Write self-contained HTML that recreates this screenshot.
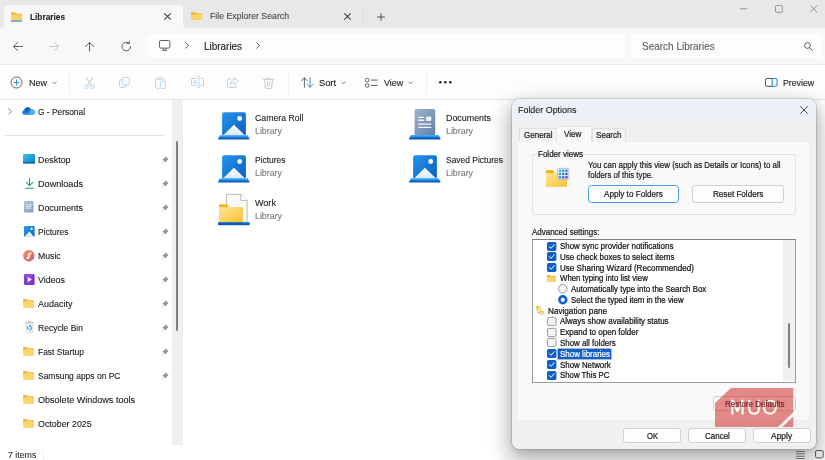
<!DOCTYPE html>
<html><head><meta charset="utf-8"><title>Libraries</title>
<style>
html,body{margin:0;padding:0;}
body{width:825px;height:460px;overflow:hidden;background:#fff;position:relative;font-family:"Liberation Sans",sans-serif;}
.a{position:absolute;}
.t{position:absolute;white-space:nowrap;-webkit-text-stroke:.12px currentColor;line-height:14px;height:14px;transform-origin:0 50%;}
.t.d{-webkit-text-stroke:.22px currentColor;}
svg{position:absolute;overflow:visible;}
.btn{position:absolute;box-sizing:border-box;background:#fdfdfd;border:1px solid #d0d0d0;border-radius:3px;}
.cb{position:absolute;width:9px;height:9px;box-sizing:border-box;border-radius:1.5px;}
.cb.on{background:#0f5fc4;}
.cb.off{background:#f6f6f6;border:1px solid #7d7d7d;}
</style></head><body>
<!-- ===== window chrome ===== -->
<div class="a" style="left:0;top:0;width:825px;height:28px;background:#e8e8e8;"></div>
<div class="a" style="left:0;top:28px;width:825px;height:36px;background:#f8f8f8;"></div>
<div class="a" style="left:0;top:64px;width:825px;height:1px;background:#e9e9e9;"></div>
<div class="a" style="left:0;top:65px;width:825px;height:34px;background:#fdfdfd;"></div>
<div class="a" style="left:0;top:99px;width:825px;height:1px;background:#e3e3e3;"></div>
<!-- active tab -->
<div class="a" style="left:4px;top:4.6px;width:179px;height:24.4px;background:#f8f8f8;border-radius:5px 5px 0 0;"></div>
<svg style="left:0;top:23px" width="190" height="6" viewBox="0 0 190 6"><path d="M0 5 Q4 5 4 1 L4 5Z M187 5 Q183 5 183 1 L183 5Z" fill="#f8f8f8"/></svg>
<!-- tab icons -->
<svg style="left:11px;top:11.5px" width="11" height="10" viewBox="0 0 11 10"><path d="M0 1.2Q0 .3 .9 .3H3.6L5 1.6H10.1Q11 1.6 11 2.5V8.4H0Z" fill="#f5b92e"/><rect x="0" y="2.6" width="11" height="6" rx=".6" fill="#fcd462"/><rect x="0" y="8.45" width="11" height="1.15" fill="#2b8bd6"/></svg>
<svg style="left:190.6px;top:11.9px" width="11.2" height="8.4" viewBox="0 0 12 10" preserveAspectRatio="none"><path d="M0 1.2Q0 .3 .9 .3H4L5.4 1.6H11.1Q12 1.6 12 2.5V8.4Q12 9.3 11.1 9.3H.9Q0 9.3 0 8.4Z" fill="#f2b632"/><rect x="0" y="2.7" width="12" height="6.6" rx=".8" fill="#fbd566"/></svg>
<!-- tab close / plus -->
<svg style="left:163.5px;top:12.5px" width="7" height="7" viewBox="0 0 7 7"><path d="M.3 .3L6.7 6.7M6.7 .3L.3 6.7" stroke="#3a3a3a" stroke-width="1.05" fill="none"/></svg>
<svg style="left:343.5px;top:12.5px" width="7" height="7" viewBox="0 0 7 7"><path d="M.3 .3L6.7 6.7M6.7 .3L.3 6.7" stroke="#3a3a3a" stroke-width="1.05" fill="none"/></svg>
<div class="a" style="left:363px;top:10px;width:1px;height:12px;background:#d6d6d6;"></div>
<svg style="left:376.5px;top:12.5px" width="8" height="8" viewBox="0 0 8 8"><path d="M4 .2V7.8M.2 4H7.8" stroke="#444" stroke-width=".9" fill="none"/></svg>
<!-- window controls -->
<svg style="left:740px;top:8px" width="8" height="2" viewBox="0 0 8 2"><path d="M0 .8H7.4" stroke="#8a8a8a" stroke-width=".9"/></svg>
<svg style="left:774.5px;top:5px" width="8" height="8" viewBox="0 0 8 8"><rect x=".5" y=".5" width="6.8" height="6.8" rx="1" fill="none" stroke="#8a8a8a" stroke-width=".9"/></svg>
<svg style="left:810px;top:5px" width="8" height="8" viewBox="0 0 8 8"><path d="M.3 .3L7.3 7.3M7.3 .3L.3 7.3" stroke="#8a8a8a" stroke-width=".9" fill="none"/></svg>
<!-- nav arrows -->
<svg style="left:12.5px;top:41.5px" width="10" height="9" viewBox="0 0 10 9"><path d="M9.6 4.5H.8M4.6 .5L.6 4.5L4.6 8.5" stroke="#555" stroke-width=".95" fill="none" stroke-linecap="round" stroke-linejoin="round"/></svg>
<svg style="left:48.8px;top:41.5px" width="10" height="9" viewBox="0 0 10 9"><path d="M.4 4.5H9.2M5.4 .5L9.4 4.5L5.4 8.5" stroke="#c2c2c2" stroke-width=".95" fill="none" stroke-linecap="round" stroke-linejoin="round"/></svg>
<svg style="left:85px;top:41.8px" width="9" height="9" viewBox="0 0 9 9"><path d="M4.5 8.8V.8M.5 4.6L4.5 .6L8.5 4.6" stroke="#555" stroke-width=".95" fill="none" stroke-linecap="round" stroke-linejoin="round"/></svg>
<svg style="left:120.5px;top:41px" width="11" height="11" viewBox="0 0 11 11"><path d="M9.6 5.5A4.3 4.3 0 1 1 7.9 2.1" stroke="#555" stroke-width=".95" fill="none" stroke-linecap="round"/><path d="M8.3 .4V2.6H6.1" stroke="#555" stroke-width=".95" fill="none" stroke-linecap="round" stroke-linejoin="round"/></svg>
<!-- address box -->
<div class="a" style="left:148px;top:34.4px;width:477.5px;height:23.2px;background:#fdfdfd;border-radius:4px;"></div>
<svg style="left:159px;top:40px" width="12" height="11" viewBox="0 0 12 11"><rect x=".5" y=".5" width="10.4" height="7.6" rx="1.4" fill="none" stroke="#555" stroke-width=".95"/><path d="M3.4 10.4H8M4.4 8.2V10.3M7 8.2V10.3" stroke="#555" stroke-width=".9" fill="none"/></svg>
<svg style="left:185.3px;top:42.4px" width="4" height="7" viewBox="0 0 4 7"><path d="M.4 .4L3.5 3.4L.4 6.4" stroke="#444" stroke-width=".9" fill="none"/></svg>
<svg style="left:256.4px;top:42.4px" width="4" height="7" viewBox="0 0 4 7"><path d="M.4 .4L3.5 3.4L.4 6.4" stroke="#444" stroke-width=".9" fill="none"/></svg>
<!-- search box -->
<div class="a" style="left:631.4px;top:34.2px;width:191.6px;height:23.4px;background:#fdfdfd;border-radius:4px;"></div>
<svg style="left:804.3px;top:42.2px" width="9" height="9" viewBox="0 0 9 9"><circle cx="3.5" cy="3.5" r="2.9" fill="none" stroke="#555" stroke-width=".95"/><path d="M5.7 5.7L8.3 8.3" stroke="#555" stroke-width="1" stroke-linecap="round"/></svg>
<!-- ===== toolbar icons ===== -->
<svg style="left:10px;top:75.6px" width="13" height="13" viewBox="0 0 13 13"><circle cx="6.5" cy="6.5" r="5.5" fill="none" stroke="#555" stroke-width=".9"/><path d="M6.5 3.9V9.1M3.9 6.5H9.1" stroke="#2e86d8" stroke-width=".95" stroke-linecap="round"/></svg>
<svg style="left:52px;top:80.6px" width="5" height="4" viewBox="0 0 5 4"><path d="M.4 .6L2.5 2.8L4.6 .6" stroke="#666" stroke-width=".8" fill="none"/></svg>
<div class="a" style="left:69px;top:71px;width:1px;height:23px;background:#f2f2f2;"></div>
<!-- cut -->
<svg style="left:83.5px;top:76.5px" width="11" height="12" viewBox="0 0 11 12"><path d="M2.2 .3L7.6 9M8.8 .3L3.4 9" stroke="#b9b9b9" stroke-width=".85" fill="none"/><circle cx="2.4" cy="9.8" r="1.7" fill="none" stroke="#a9cdf0" stroke-width=".85"/><circle cx="8.6" cy="9.8" r="1.7" fill="none" stroke="#a9cdf0" stroke-width=".85"/></svg>
<!-- copy -->
<svg style="left:119.3px;top:77.3px" width="11" height="11" viewBox="0 0 11 11"><rect x=".5" y="2.6" width="6.6" height="7.8" rx="1.6" fill="none" stroke="#c4c4c4" stroke-width=".85"/><rect x="3.4" y=".5" width="7" height="7.6" rx="1.6" fill="#fdfdfd" stroke="#a9cdf0" stroke-width=".85"/></svg>
<!-- paste -->
<svg style="left:155px;top:76.5px" width="11" height="12" viewBox="0 0 11 12"><path d="M3 1.7H1.9Q.5 1.7 .5 3.1V10Q.5 11.4 1.9 11.4H4.4" fill="none" stroke="#c4c4c4" stroke-width=".85"/><path d="M7.4 1.7H8.3Q9.5 1.7 9.5 3.1V3.8" fill="none" stroke="#c4c4c4" stroke-width=".85"/><rect x="3" y=".5" width="4.4" height="2" rx=".9" fill="none" stroke="#c4c4c4" stroke-width=".8"/><rect x="5.2" y="4.3" width="5.3" height="7.2" rx="1.3" fill="none" stroke="#a9cdf0" stroke-width=".85"/></svg>
<!-- rename -->
<svg style="left:190.5px;top:76.3px" width="13" height="12" viewBox="0 0 13 12"><path d="M6.2 2.3H2Q.5 2.3 .5 3.8V8.2Q.5 9.7 2 9.7H6.2M9.6 2.3H11Q12.5 2.3 12.5 3.8V8.2Q12.5 9.7 11 9.7H9.6" fill="none" stroke="#c4c4c4" stroke-width=".85"/><path d="M7.9 .4V11.6M6.7 .4H9.1M6.7 11.6H9.1" stroke="#a9cdf0" stroke-width=".85" fill="none"/><path d="M2.6 8L4.2 3.9L5.8 8M3.1 6.7H5.3" stroke="#a9cdf0" stroke-width=".75" fill="none"/></svg>
<!-- share -->
<svg style="left:227px;top:77px" width="12" height="11" viewBox="0 0 12 11"><path d="M4.3 1.8H2.3Q.5 1.8 .5 3.6V8.7Q.5 10.5 2.3 10.5H7.6Q9.4 10.5 9.4 8.7V8.2" fill="none" stroke="#c4c4c4" stroke-width=".85"/><path d="M7.2 .6L11.4 4.1L7.2 7.6V5.6Q4.6 5.4 3.2 7.6Q3.4 3 7.2 2.7Z" fill="none" stroke="#a9cdf0" stroke-width=".85" stroke-linejoin="round"/></svg>
<!-- delete -->
<svg style="left:263.3px;top:76.6px" width="11" height="12" viewBox="0 0 11 12"><path d="M.3 2.3H10.7M3.9 2.1Q3.9 .5 5.5 .5Q7.1 .5 7.1 2.1M1.5 2.4L2.3 10.2Q2.4 11.5 3.7 11.5H7.3Q8.6 11.5 8.7 10.2L9.5 2.4M4.4 4.8V8.9M6.6 4.8V8.9" fill="none" stroke="#c0c0c0" stroke-width=".85" stroke-linecap="round"/></svg>
<div class="a" style="left:288px;top:71px;width:1px;height:23px;background:#f0f0f0;"></div>
<!-- sort -->
<svg style="left:301px;top:77px" width="13" height="11" viewBox="0 0 13 11"><path d="M3.4 10.4V.9M.5 3.8L3.4 .8L6.3 3.8" stroke="#555" stroke-width=".9" fill="none" stroke-linecap="round" stroke-linejoin="round"/><path d="M9 .6V10.1M6.1 7.2L9 10.2L11.9 7.2" stroke="#2e86d8" stroke-width=".9" fill="none" stroke-linecap="round" stroke-linejoin="round"/></svg>
<svg style="left:340.5px;top:80.6px" width="5" height="4" viewBox="0 0 5 4"><path d="M.4 .6L2.5 2.8L4.6 .6" stroke="#666" stroke-width=".8" fill="none"/></svg>
<!-- view -->
<svg style="left:365px;top:77.6px" width="13" height="10" viewBox="0 0 13 10"><rect x=".5" y=".5" width="3.4" height="3.2" rx=".9" fill="none" stroke="#555" stroke-width=".85"/><rect x=".5" y="5.9" width="3.4" height="3.2" rx=".9" fill="none" stroke="#555" stroke-width=".85"/><path d="M6.3 2.1H12.2M6.3 7.5H12.2" stroke="#555" stroke-width=".9" stroke-linecap="round"/></svg>
<svg style="left:407.8px;top:80.6px" width="5" height="4" viewBox="0 0 5 4"><path d="M.4 .6L2.5 2.8L4.6 .6" stroke="#666" stroke-width=".8" fill="none"/></svg>
<div class="a" style="left:426px;top:71px;width:1px;height:23px;background:#f0f0f0;"></div>
<svg style="left:438.6px;top:81.4px" width="13" height="3" viewBox="0 0 13 3"><circle cx="1.3" cy="1.3" r="1.25" fill="#222"/><circle cx="6.3" cy="1.3" r="1.25" fill="#222"/><circle cx="11.3" cy="1.3" r="1.25" fill="#222"/></svg>
<!-- preview -->
<svg style="left:765px;top:78.1px" width="13" height="9" viewBox="0 0 13 9"><path d="M7.2 .5H2.2Q.5 .5 .5 2.2V6.6Q.5 8.3 2.2 8.3H7.2" fill="none" stroke="#4a4a4a" stroke-width="1"/><path d="M7.2 .5H10.4Q12.1 .5 12.1 2.2V6.6Q12.1 8.3 10.4 8.3H7.2Z" fill="none" stroke="#2e86d8" stroke-width="1.05"/></svg>
<!-- ===== nav pane ===== -->
<div class="a" style="left:171.7px;top:100px;width:11.5px;height:345.3px;background:#f0f0f0;"></div>
<div class="a" style="left:175.9px;top:141.3px;width:2.1px;height:189.5px;background:#7f7f7f;border-radius:1px;"></div>
<div class="a" style="left:5px;top:134.6px;width:160px;height:1px;background:#e3e3e3;"></div>
<svg style="left:8.2px;top:108px" width="4" height="7" viewBox="0 0 4 7"><path d="M.4 .4L3.4 3.4L.4 6.4" stroke="#666" stroke-width=".85" fill="none"/></svg>
<!-- onedrive cloud -->
<svg style="left:22.2px;top:107.2px" width="13" height="8" viewBox="0 0 13 8"><path d="M3.2 7.8Q.2 7.8 .2 5.4Q.2 3.4 2.3 3Q3 .2 5.8 .2Q8 .2 8.9 2.2Q12.8 2.4 12.8 5.3Q12.8 7.8 10.2 7.8Z" fill="#2083e4"/><path d="M2.3 3Q3 .2 5.8 .2Q8 .2 8.9 2.2Q7.5 2.4 6.6 3.6L3.8 5.4Q3 3.3 2.3 3Z" fill="#0f62c4"/><path d="M8.9 2.2Q12.8 2.4 12.8 5.3Q12.8 7.8 10.2 7.8H6L8 4.6Q8 3 8.9 2.2Z" fill="#4bb0f4"/></svg>
<!-- desktop -->
<svg style="left:23.2px;top:154.4px" width="12" height="10" viewBox="0 0 12 10"><defs><linearGradient id="gd" x1="0" y1="0" x2="1" y2="1"><stop offset="0" stop-color="#3cc4ee"/><stop offset="1" stop-color="#1278c8"/></linearGradient></defs><rect x="0" y="0" width="12" height="9.4" rx="1" fill="url(#gd)"/><rect x="0" y="8.2" width="12" height="1.2" fill="#0c5aa6"/></svg>
<!-- downloads -->
<svg style="left:24.6px;top:178px" width="9" height="11" viewBox="0 0 9 11"><path d="M4.5 .4V7.4M1.3 4.4L4.5 7.6L7.7 4.4M.6 10.2H8.4" stroke="#12a078" stroke-width="1.05" fill="none" stroke-linecap="round" stroke-linejoin="round"/></svg>
<!-- documents -->
<svg style="left:24.1px;top:201.4px" width="10" height="12" viewBox="0 0 10 12"><defs><linearGradient id="gdoc" x1="0" y1="0" x2="1" y2="1"><stop offset="0" stop-color="#b6c6de"/><stop offset="1" stop-color="#7f9bc4"/></linearGradient></defs><rect x="0" y="0" width="9.4" height="11.4" rx="1" fill="url(#gdoc)"/><path d="M2 4H4.6M2 5.6H7.4M2 7.2H7.4" stroke="#eef3fa" stroke-width=".8"/><rect x="5.4" y="2.8" width="2" height="1.8" fill="#eef3fa"/></svg>
<!-- pictures -->
<svg style="left:23.6px;top:226.3px" width="11" height="11" viewBox="0 0 11 11"><defs><linearGradient id="gpic" x1="0" y1="0" x2="1" y2="1"><stop offset="0" stop-color="#2a9df0"/><stop offset="1" stop-color="#0c62c0"/></linearGradient></defs><rect x="0" y="0" width="10.6" height="10.8" rx="1" fill="url(#gpic)"/><circle cx="7.6" cy="2.9" r="1.1" fill="#fff"/><path d="M.6 10.8L5.3 5.4L10 10.8Z" fill="#eef6ff"/></svg>
<!-- music -->
<svg style="left:22.8px;top:249.6px" width="12" height="12" viewBox="0 0 12 12"><defs><linearGradient id="gmus" x1="0" y1="0" x2="1" y2="1"><stop offset="0" stop-color="#f0925a"/><stop offset="1" stop-color="#d4587c"/></linearGradient></defs><circle cx="5.8" cy="5.8" r="5.7" fill="url(#gmus)"/><path d="M5.4 8V3.4L8 2.8V4.2L6.2 4.6V8" fill="none" stroke="#fff" stroke-width=".9"/><circle cx="4.8" cy="8" r="1.3" fill="#fff"/></svg>
<!-- videos -->
<svg style="left:23.6px;top:274px" width="11" height="11" viewBox="0 0 11 11"><defs><linearGradient id="gvid" x1="0" y1="0" x2="1" y2="1"><stop offset="0" stop-color="#a255e8"/><stop offset="1" stop-color="#7a2fc8"/></linearGradient></defs><rect x="0" y="0" width="10.6" height="10.9" rx="1" fill="url(#gvid)"/><path d="M3.8 3L7.8 5.45L3.8 7.9Z" fill="#fff"/><path d="M1.2 1.2V9.8M9.4 1.2V9.8" stroke="#5a1ea0" stroke-width="1" stroke-dasharray="1 1.1"/></svg>
<!-- recycle bin -->
<svg style="left:24.6px;top:321px" width="9" height="12" viewBox="0 0 9 12"><path d="M.6 2H8.4L7.8 11.2Q7.7 11.8 7.1 11.8H1.9Q1.3 11.8 1.2 11.2Z" fill="#eef1f4" stroke="#c5ccd3" stroke-width=".5"/><path d="M.3 1.6H8.7" stroke="#b9c0c8" stroke-width=".9"/><path d="M3 .5H6" stroke="#c5ccd3" stroke-width=".8"/><circle cx="4.5" cy="6.8" r="1.9" fill="none" stroke="#1f7fd8" stroke-width="1.1" stroke-dasharray="2.6 1.3"/></svg>

<svg style="left:23.3px;top:299.1px" width="11" height="8.5" viewBox="0 0 12 9" preserveAspectRatio="none"><path d="M0 1Q0 .1 .9 .1H4L5.4 1.4H11.1Q12 1.4 12 2.3V8Q12 8.9 11.1 8.9H.9Q0 8.9 0 8Z" fill="#f2b632"/><rect x="0" y="2.4" width="12" height="6.5" rx=".8" fill="#fbd566"/></svg>
<svg style="left:23.3px;top:347.1px" width="11" height="8.5" viewBox="0 0 12 9" preserveAspectRatio="none"><path d="M0 1Q0 .1 .9 .1H4L5.4 1.4H11.1Q12 1.4 12 2.3V8Q12 8.9 11.1 8.9H.9Q0 8.9 0 8Z" fill="#f2b632"/><rect x="0" y="2.4" width="12" height="6.5" rx=".8" fill="#fbd566"/></svg>
<svg style="left:23.3px;top:371.1px" width="11" height="8.5" viewBox="0 0 12 9" preserveAspectRatio="none"><path d="M0 1Q0 .1 .9 .1H4L5.4 1.4H11.1Q12 1.4 12 2.3V8Q12 8.9 11.1 8.9H.9Q0 8.9 0 8Z" fill="#f2b632"/><rect x="0" y="2.4" width="12" height="6.5" rx=".8" fill="#fbd566"/></svg>
<svg style="left:23.3px;top:395.1px" width="11" height="8.5" viewBox="0 0 12 9" preserveAspectRatio="none"><path d="M0 1Q0 .1 .9 .1H4L5.4 1.4H11.1Q12 1.4 12 2.3V8Q12 8.9 11.1 8.9H.9Q0 8.9 0 8Z" fill="#f2b632"/><rect x="0" y="2.4" width="12" height="6.5" rx=".8" fill="#fbd566"/></svg>
<svg style="left:23.3px;top:419.1px" width="11" height="8.5" viewBox="0 0 12 9" preserveAspectRatio="none"><path d="M0 1Q0 .1 .9 .1H4L5.4 1.4H11.1Q12 1.4 12 2.3V8Q12 8.9 11.1 8.9H.9Q0 8.9 0 8Z" fill="#f2b632"/><rect x="0" y="2.4" width="12" height="6.5" rx=".8" fill="#fbd566"/></svg>
<svg style="left:160.8px;top:155.5px" width="8" height="8" viewBox="0 0 8 8"><path d="M4.6 .3L7.7 3.4L6.6 3.8L5.2 5.2L5 6.8L3.2 5L.5 7.7L.3 7.5L3 4.8L1.2 3L2.8 2.8L4.2 1.4Z" fill="#8a96a1"/></svg>
<svg style="left:160.8px;top:179.5px" width="8" height="8" viewBox="0 0 8 8"><path d="M4.6 .3L7.7 3.4L6.6 3.8L5.2 5.2L5 6.8L3.2 5L.5 7.7L.3 7.5L3 4.8L1.2 3L2.8 2.8L4.2 1.4Z" fill="#8a96a1"/></svg>
<svg style="left:160.8px;top:203.5px" width="8" height="8" viewBox="0 0 8 8"><path d="M4.6 .3L7.7 3.4L6.6 3.8L5.2 5.2L5 6.8L3.2 5L.5 7.7L.3 7.5L3 4.8L1.2 3L2.8 2.8L4.2 1.4Z" fill="#8a96a1"/></svg>
<svg style="left:160.8px;top:227.5px" width="8" height="8" viewBox="0 0 8 8"><path d="M4.6 .3L7.7 3.4L6.6 3.8L5.2 5.2L5 6.8L3.2 5L.5 7.7L.3 7.5L3 4.8L1.2 3L2.8 2.8L4.2 1.4Z" fill="#8a96a1"/></svg>
<svg style="left:160.8px;top:251.5px" width="8" height="8" viewBox="0 0 8 8"><path d="M4.6 .3L7.7 3.4L6.6 3.8L5.2 5.2L5 6.8L3.2 5L.5 7.7L.3 7.5L3 4.8L1.2 3L2.8 2.8L4.2 1.4Z" fill="#8a96a1"/></svg>
<svg style="left:160.8px;top:275.5px" width="8" height="8" viewBox="0 0 8 8"><path d="M4.6 .3L7.7 3.4L6.6 3.8L5.2 5.2L5 6.8L3.2 5L.5 7.7L.3 7.5L3 4.8L1.2 3L2.8 2.8L4.2 1.4Z" fill="#8a96a1"/></svg>
<svg style="left:160.8px;top:299.5px" width="8" height="8" viewBox="0 0 8 8"><path d="M4.6 .3L7.7 3.4L6.6 3.8L5.2 5.2L5 6.8L3.2 5L.5 7.7L.3 7.5L3 4.8L1.2 3L2.8 2.8L4.2 1.4Z" fill="#8a96a1"/></svg>
<svg style="left:160.8px;top:323.5px" width="8" height="8" viewBox="0 0 8 8"><path d="M4.6 .3L7.7 3.4L6.6 3.8L5.2 5.2L5 6.8L3.2 5L.5 7.7L.3 7.5L3 4.8L1.2 3L2.8 2.8L4.2 1.4Z" fill="#8a96a1"/></svg>
<svg style="left:160.8px;top:347.5px" width="8" height="8" viewBox="0 0 8 8"><path d="M4.6 .3L7.7 3.4L6.6 3.8L5.2 5.2L5 6.8L3.2 5L.5 7.7L.3 7.5L3 4.8L1.2 3L2.8 2.8L4.2 1.4Z" fill="#8a96a1"/></svg>
<svg style="left:160.8px;top:371.5px" width="8" height="8" viewBox="0 0 8 8"><path d="M4.6 .3L7.7 3.4L6.6 3.8L5.2 5.2L5 6.8L3.2 5L.5 7.7L.3 7.5L3 4.8L1.2 3L2.8 2.8L4.2 1.4Z" fill="#8a96a1"/></svg>
<svg width="0" height="0" style="left:0;top:0"><defs>
<linearGradient id="gsq" x1="0" y1="0" x2="1" y2="1"><stop offset="0" stop-color="#2496ee"/><stop offset="1" stop-color="#0a5dbd"/></linearGradient>
<linearGradient id="gbase" x1="0" y1="0" x2="0" y2="1"><stop offset="0" stop-color="#4ab2f8"/><stop offset=".4" stop-color="#2d93ea"/><stop offset=".6" stop-color="#0f66c8"/><stop offset="1" stop-color="#0a56b4"/></linearGradient>
<linearGradient id="gmt" x1="0" y1="0" x2="0" y2="1"><stop offset="0" stop-color="#ffffff"/><stop offset="1" stop-color="#d6e9fb"/></linearGradient>
<linearGradient id="gdc" x1="0" y1="0" x2="1" y2="1"><stop offset="0" stop-color="#9fb3cf"/><stop offset="1" stop-color="#607fa9"/></linearGradient>
<linearGradient id="gfb" x1="0" y1="0" x2="1" y2="1"><stop offset="0" stop-color="#fde391"/><stop offset="1" stop-color="#fcc437"/></linearGradient>
</defs></svg>
<svg style="left:217.9px;top:112.1px" width="32" height="28" viewBox="0 0 32 28"><rect x="4.1" y=".2" width="23.8" height="23.6" rx="2" fill="url(#gsq)"/><circle cx="21.7" cy="6.5" r="2.4" fill="#fff"/><path d="M5 23.6L15.9 12.8L27.2 23.6Z" fill="url(#gmt)"/><path d="M1.9 23.2H29.7L31.6 27Q31.7 27.6 31 27.6H.6Q-.1 27.6 0 27Z" fill="url(#gbase)"/></svg>
<svg style="left:217.9px;top:154.8px" width="32" height="28" viewBox="0 0 32 28"><rect x="4.1" y=".2" width="23.8" height="23.6" rx="2" fill="url(#gsq)"/><circle cx="21.7" cy="6.5" r="2.4" fill="#fff"/><path d="M5 23.6L15.9 12.8L27.2 23.6Z" fill="url(#gmt)"/><path d="M1.9 23.2H29.7L31.6 27Q31.7 27.6 31 27.6H.6Q-.1 27.6 0 27Z" fill="url(#gbase)"/></svg>
<svg style="left:408.7px;top:154.8px" width="32" height="28" viewBox="0 0 32 28"><rect x="4.1" y=".2" width="23.8" height="23.6" rx="2" fill="url(#gsq)"/><circle cx="21.7" cy="6.5" r="2.4" fill="#fff"/><path d="M5 23.6L15.9 12.8L27.2 23.6Z" fill="url(#gmt)"/><path d="M1.9 23.2H29.7L31.6 27Q31.7 27.6 31 27.6H.6Q-.1 27.6 0 27Z" fill="url(#gbase)"/></svg>
<svg style="left:408.7px;top:109.3px" width="32" height="31" viewBox="0 0 32 31"><rect x="5.5" y=".1" width="20.7" height="26.3" rx="1.6" fill="url(#gdc)"/><path d="M9.2 8.4H15.3M9.2 11.2H15.3M9.2 15.1H22.3M9.2 18.4H22.3" stroke="#f3f6fb" stroke-width="1.4"/><rect x="17.2" y="7.6" width="5.1" height="4.3" fill="#f3f6fb"/><path d="M1.9 26H29.7L31.6 29.8Q31.7 30.4 31 30.4H.6Q-.1 30.4 0 29.8Z" fill="url(#gbase)"/></svg>
<svg style="left:217.9px;top:193.9px" width="32" height="32" viewBox="0 0 32 32"><path d="M9 .3H22.8L29.1 6.5V28.4H8.4V.9Q8.4 .3 9 .3Z" fill="#f9f9f9" stroke="#9c9c9c" stroke-width=".7"/><path d="M22.8 .3V5.3Q22.8 6.5 24 6.5H29.1" fill="#fff" stroke="#9c9c9c" stroke-width=".7"/><path d="M1.1 11.4Q1.1 10.2 2.3 10.2H9.3L11.2 13H23.6Q24.8 13 24.8 14.2V28.7H1.1Z" fill="#f5b21c"/><rect x="1.1" y="13.1" width="23.7" height="15.6" rx="1" fill="url(#gfb)"/><path d="M0 28.2H31.7V30.6Q31.7 31.3 31 31.3H.7Q0 31.3 0 30.6Z" fill="#0b5cbf"/><path d="M24.8 28.2H31.2V29.2H24.8Z" fill="#2f9bec"/></svg>
<div class="a" style="left:43px;top:450.3px;width:1px;height:10px;background:#eeeeee;"></div>
<svg style="left:796.1px;top:451px" width="9" height="8" viewBox="0 0 9 8"><path d="M0 .5H8.7M0 2.85H8.7M0 5.3H8.7M0 7.5H8.7" stroke="#6a6a6a" stroke-width=".8"/></svg>
<svg style="left:814.7px;top:450.4px" width="9" height="9" viewBox="0 0 9 9"><rect x=".5" y=".5" width="7.7" height="7.4" rx="1.3" fill="#f6f6f6" stroke="#5e5e5e" stroke-width="1"/></svg>
<span id="t0" class="t" style="left:30.00px;top:9.80px;font-size:9.6px;color:#222;font-weight:bold;transform:scaleX(0.8635);font-family:"Liberation Sans", sans-serif;">Libraries</span>
<span id="t1" class="t" style="left:209.60px;top:9.40px;font-size:9.6px;color:#4a4a4a;font-weight:normal;transform:scaleX(0.9089);font-family:"Liberation Sans", sans-serif;">File Explorer Search</span>
<span id="t2" class="t" style="left:203.70px;top:39.90px;font-size:10.4px;color:#1a1a1a;font-weight:normal;transform:scaleX(0.9559);font-family:"Liberation Sans", sans-serif;">Libraries</span>
<span id="t3" class="t" style="left:642.30px;top:40.30px;font-size:10.4px;color:#5c5c5c;font-weight:normal;transform:scaleX(0.9607);font-family:"Liberation Sans", sans-serif;">Search Libraries</span>
<span id="t4" class="t" style="left:29.00px;top:76.10px;font-size:9.8px;color:#1a1a1a;font-weight:normal;transform:scaleX(0.9179);font-family:"Liberation Sans", sans-serif;">New</span>
<span id="t5" class="t" style="left:318.80px;top:76.10px;font-size:9.8px;color:#1a1a1a;font-weight:normal;transform:scaleX(0.9461);font-family:"Liberation Sans", sans-serif;">Sort</span>
<span id="t6" class="t" style="left:383.80px;top:76.10px;font-size:9.8px;color:#1a1a1a;font-weight:normal;transform:scaleX(0.9116);font-family:"Liberation Sans", sans-serif;">View</span>
<span id="t7" class="t" style="left:783.30px;top:76.10px;font-size:9.8px;color:#1a1a1a;font-weight:normal;transform:scaleX(0.8922);font-family:"Liberation Sans", sans-serif;">Preview</span>
<span id="t8" class="t" style="left:38.00px;top:104.80px;font-size:9.6px;color:#1b1b1b;font-weight:normal;transform:scaleX(0.8726);font-family:"Liberation Sans", sans-serif;">G - Personal</span>
<span id="t9" class="t" style="left:38.00px;top:152.70px;font-size:9.6px;color:#1b1b1b;font-weight:normal;transform:scaleX(0.9232);font-family:"Liberation Sans", sans-serif;">Desktop</span>
<span id="t10" class="t" style="left:38.00px;top:176.70px;font-size:9.6px;color:#1b1b1b;font-weight:normal;transform:scaleX(0.9480);font-family:"Liberation Sans", sans-serif;">Downloads</span>
<span id="t11" class="t" style="left:38.00px;top:200.70px;font-size:9.6px;color:#1b1b1b;font-weight:normal;transform:scaleX(0.9272);font-family:"Liberation Sans", sans-serif;">Documents</span>
<span id="t12" class="t" style="left:38.00px;top:224.70px;font-size:9.6px;color:#1b1b1b;font-weight:normal;transform:scaleX(0.8772);font-family:"Liberation Sans", sans-serif;">Pictures</span>
<span id="t13" class="t" style="left:38.00px;top:248.70px;font-size:9.6px;color:#1b1b1b;font-weight:normal;transform:scaleX(0.9057);font-family:"Liberation Sans", sans-serif;">Music</span>
<span id="t14" class="t" style="left:38.00px;top:272.70px;font-size:9.6px;color:#1b1b1b;font-weight:normal;transform:scaleX(0.9255);font-family:"Liberation Sans", sans-serif;">Videos</span>
<span id="t15" class="t" style="left:38.00px;top:296.70px;font-size:9.6px;color:#1b1b1b;font-weight:normal;transform:scaleX(0.9376);font-family:"Liberation Sans", sans-serif;">Audacity</span>
<span id="t16" class="t" style="left:38.00px;top:320.70px;font-size:9.6px;color:#1b1b1b;font-weight:normal;transform:scaleX(0.8883);font-family:"Liberation Sans", sans-serif;">Recycle Bin</span>
<span id="t17" class="t" style="left:38.00px;top:344.70px;font-size:9.6px;color:#1b1b1b;font-weight:normal;transform:scaleX(0.8801);font-family:"Liberation Sans", sans-serif;">Fast Startup</span>
<span id="t18" class="t" style="left:38.00px;top:368.70px;font-size:9.6px;color:#1b1b1b;font-weight:normal;transform:scaleX(0.8838);font-family:"Liberation Sans", sans-serif;">Samsung apps on PC</span>
<span id="t19" class="t" style="left:38.00px;top:392.70px;font-size:9.6px;color:#1b1b1b;font-weight:normal;transform:scaleX(0.9425);font-family:"Liberation Sans", sans-serif;">Obsolete Windows tools</span>
<span id="t20" class="t" style="left:38.00px;top:416.70px;font-size:9.6px;color:#1b1b1b;font-weight:normal;transform:scaleX(0.9236);font-family:"Liberation Sans", sans-serif;">October 2025</span>
<span id="t21" class="t" style="left:7.50px;top:448.20px;font-size:9.6px;color:#333;font-weight:normal;transform:scaleX(0.9147);font-family:"Liberation Sans", sans-serif;">7 items</span>
<span id="t22" class="t" style="left:255.10px;top:111.00px;font-size:9.6px;color:#1b1b1b;font-weight:normal;transform:scaleX(0.9076);font-family:"Liberation Sans", sans-serif;">Camera Roll</span>
<span id="t23" class="t" style="left:255.10px;top:123.80px;font-size:9.6px;color:#7a7a7a;font-weight:normal;transform:scaleX(0.9172);font-family:"Liberation Sans", sans-serif;">Library</span>
<span id="t24" class="t" style="left:255.10px;top:153.40px;font-size:9.6px;color:#1b1b1b;font-weight:normal;transform:scaleX(0.8772);font-family:"Liberation Sans", sans-serif;">Pictures</span>
<span id="t25" class="t" style="left:255.10px;top:166.20px;font-size:9.6px;color:#7a7a7a;font-weight:normal;transform:scaleX(0.9172);font-family:"Liberation Sans", sans-serif;">Library</span>
<span id="t26" class="t" style="left:255.10px;top:195.90px;font-size:9.6px;color:#1b1b1b;font-weight:normal;transform:scaleX(0.9406);font-family:"Liberation Sans", sans-serif;">Work</span>
<span id="t27" class="t" style="left:255.10px;top:208.90px;font-size:9.6px;color:#7a7a7a;font-weight:normal;transform:scaleX(0.9172);font-family:"Liberation Sans", sans-serif;">Library</span>
<span id="t28" class="t" style="left:446.00px;top:111.00px;font-size:9.6px;color:#1b1b1b;font-weight:normal;transform:scaleX(0.9272);font-family:"Liberation Sans", sans-serif;">Documents</span>
<span id="t29" class="t" style="left:446.00px;top:123.80px;font-size:9.6px;color:#7a7a7a;font-weight:normal;transform:scaleX(0.9206);font-family:"Liberation Sans", sans-serif;">Library</span>
<span id="t30" class="t" style="left:446.00px;top:153.40px;font-size:9.6px;color:#1b1b1b;font-weight:normal;transform:scaleX(0.8817);font-family:"Liberation Sans", sans-serif;">Saved Pictures</span>
<span id="t31" class="t" style="left:446.00px;top:166.20px;font-size:9.6px;color:#7a7a7a;font-weight:normal;transform:scaleX(0.9206);font-family:"Liberation Sans", sans-serif;">Library</span>
<div class="a" style="left:511.7px;top:98.5px;width:304.7px;height:350.2px;border-radius:7px;background:#f0f0f0;box-shadow:0 0 0 .6px rgba(0,0,0,.17),0 10px 22px 3px rgba(0,0,0,.30),0 1px 6px rgba(0,0,0,.12);overflow:hidden;"><div class="a" style="left:0;top:0;width:305px;height:22.6px;background:#ecf1f8;"></div></div>
<svg style="left:800px;top:105.6px" width="8" height="8" viewBox="0 0 8 8"><path d="M.3 .3L7.7 7.7M7.7 .3L.3 7.7" stroke="#2a2a2a" stroke-width=".85" fill="none"/></svg>
<div class="a" style="left:517.4px;top:141.2px;width:293.1px;height:279.5px;background:#f9f9f9;box-sizing:border-box;border:1px solid #efefef;"></div>
<div class="a" style="left:519px;top:128px;width:38px;height:13.6px;background:#f4f4f4;box-sizing:border-box;border:1px solid #e0e0e0;border-bottom:none;"></div>
<div class="a" style="left:592px;top:128px;width:33.8px;height:13.6px;background:#f4f4f4;box-sizing:border-box;border:1px solid #e0e0e0;border-bottom:none;"></div>
<div class="a" style="left:556.4px;top:126px;width:36px;height:16.4px;background:#f9f9f9;box-sizing:border-box;border:1px solid #e3e3e3;border-bottom:none;"></div>
<div class="a" style="left:532.4px;top:154.2px;width:264px;height:60.8px;box-sizing:border-box;border:1px solid #e3e3e3;border-radius:2px;"></div>
<svg style="left:545.6px;top:168px" width="24" height="19" viewBox="0 0 24 19"><defs><linearGradient id="gg" x1="0" y1="0" x2="1" y2="1"><stop offset="0" stop-color="#28d0e0"/><stop offset=".5" stop-color="#2a7fd8"/><stop offset="1" stop-color="#6a30c0"/></linearGradient></defs><path d="M0 3.1Q0 2.1 1 2.1H6.8L8.4 5H19.8Q20.8 5 20.8 6V18.4H0Z" fill="#f5b21c"/><rect x="0" y="5" width="20.8" height="13.4" rx="1" fill="url(#gfb)"/><rect x="11.6" y=".4" width="11.2" height="11.2" rx=".8" fill="#fdfdfd" stroke="#a8a8a8" stroke-width=".7"/><g fill="url(#gg)"><rect x="12.7" y="1.5" width="9" height="9" rx=".5"/></g><path d="M15.55 1.2V10.8M18.85 1.2V10.8M12.3 4.35H22.1M12.3 7.65H22.1" stroke="#fdfdfd" stroke-width=".9"/></svg>
<div class="btn" style="left:587.6px;top:185.1px;width:91.6px;height:17.6px;border:1.2px solid #4d9ce6;border-radius:3.5px;"></div>
<div class="btn" style="left:692.2px;top:185.1px;width:92px;height:17.6px;"></div>
<div class="a" style="left:532.4px;top:239.3px;width:263.8px;height:143.6px;background:#fff;box-sizing:border-box;border:1px solid #9a9a9a;border-top-color:#7e7e7e;"></div>
<div class="a" style="left:783.2px;top:240.3px;width:12px;height:141.2px;background:#f0f0f0;"></div>
<div class="a" style="left:788.1px;top:323px;width:1.6px;height:45.3px;background:#808080;border-radius:1px;"></div>
<div class="a" style="left:558px;top:348.6px;width:53px;height:10.2px;background:#0b5ecb;box-sizing:border-box;box-shadow:0 0 0 .6px #8a8a8a;"></div>
<svg style="left:546.8px;top:241.6px" width="10" height="9" viewBox="0 0 10 9"><rect x="0" y="0" width="9.4" height="8.9" rx="1.6" fill="#0f5fc6"/><path d="M2.3 4.6L4 6.3L7.2 2.7" stroke="#fff" stroke-width="1" fill="none" stroke-linecap="round" stroke-linejoin="round"/></svg>
<svg style="left:546.8px;top:252.3px" width="10" height="9" viewBox="0 0 10 9"><rect x="0" y="0" width="9.4" height="8.9" rx="1.6" fill="#0f5fc6"/><path d="M2.3 4.6L4 6.3L7.2 2.7" stroke="#fff" stroke-width="1" fill="none" stroke-linecap="round" stroke-linejoin="round"/></svg>
<svg style="left:546.8px;top:263.1px" width="10" height="9" viewBox="0 0 10 9"><rect x="0" y="0" width="9.4" height="8.9" rx="1.6" fill="#0f5fc6"/><path d="M2.3 4.6L4 6.3L7.2 2.7" stroke="#fff" stroke-width="1" fill="none" stroke-linecap="round" stroke-linejoin="round"/></svg>
<svg style="left:546.8px;top:316.8px" width="10" height="9" viewBox="0 0 10 9"><rect x=".4" y=".4" width="8.7" height="8.2" rx="1.6" fill="#f4f4f4" stroke="#858585" stroke-width=".8"/></svg>
<svg style="left:546.8px;top:327.6px" width="10" height="9" viewBox="0 0 10 9"><rect x=".4" y=".4" width="8.7" height="8.2" rx="1.6" fill="#f4f4f4" stroke="#858585" stroke-width=".8"/></svg>
<svg style="left:546.8px;top:338.4px" width="10" height="9" viewBox="0 0 10 9"><rect x=".4" y=".4" width="8.7" height="8.2" rx="1.6" fill="#f4f4f4" stroke="#858585" stroke-width=".8"/></svg>
<svg style="left:546.8px;top:349.3px" width="10" height="9" viewBox="0 0 10 9"><rect x="0" y="0" width="9.4" height="8.9" rx="1.6" fill="#0f5fc6"/><path d="M2.3 4.6L4 6.3L7.2 2.7" stroke="#fff" stroke-width="1" fill="none" stroke-linecap="round" stroke-linejoin="round"/></svg>
<svg style="left:546.8px;top:360.1px" width="10" height="9" viewBox="0 0 10 9"><rect x="0" y="0" width="9.4" height="8.9" rx="1.6" fill="#0f5fc6"/><path d="M2.3 4.6L4 6.3L7.2 2.7" stroke="#fff" stroke-width="1" fill="none" stroke-linecap="round" stroke-linejoin="round"/></svg>
<svg style="left:546.8px;top:371.0px" width="10" height="9" viewBox="0 0 10 9"><rect x="0" y="0" width="9.4" height="8.9" rx="1.6" fill="#0f5fc6"/><path d="M2.3 4.6L4 6.3L7.2 2.7" stroke="#fff" stroke-width="1" fill="none" stroke-linecap="round" stroke-linejoin="round"/></svg>
<svg style="left:547.3px;top:274.9px" width="9" height="7" viewBox="0 0 9 7"><path d="M0 .8Q0 .1 .7 .1H3L4 1.1H8.3Q9 1.1 9 1.8V6.7H0Z" fill="#f2b632"/><rect x="0" y="1.9" width="9" height="4.9" rx=".5" fill="#fbd566"/></svg>
<svg style="left:558.1px;top:284.1px" width="10" height="10" viewBox="0 0 10 10"><circle cx="4.8" cy="4.8" r="4.3" fill="#f3f3f3" stroke="#858585" stroke-width=".8"/></svg>
<svg style="left:558.1px;top:294.5px" width="10" height="10" viewBox="0 0 10 10"><circle cx="4.8" cy="4.8" r="4.7" fill="#0f5fc6"/><circle cx="4.8" cy="4.8" r="2.1" fill="#fff"/></svg>
<svg style="left:536.1px;top:306.4px" width="8" height="9" viewBox="0 0 8 9"><path d="M1.6 3.4V6.6H4" stroke="#8a8a8a" stroke-width=".6" fill="none"/><path d="M0 .5Q0 0 .5 0H1.8L2.4 .6H4.1Q4.6 .6 4.6 1.1V3.6H0Z" fill="#f2b632"/><rect x="0" y="1.1" width="4.6" height="2.5" fill="#fbd566"/><path d="M3.4 5.1Q3.4 4.6 3.9 4.6H5.2L5.8 5.2H7.5Q8 5.2 8 5.7V8.3H3.4Z" fill="#f2b632"/><rect x="3.4" y="5.7" width="4.6" height="2.6" fill="#fbd566"/></svg>
<div class="btn" style="left:713px;top:395.7px;width:82.6px;height:14.9px;"></div>
<div class="btn" style="left:623px;top:428.3px;width:58.4px;height:15.1px;"></div>
<div class="btn" style="left:688px;top:428.3px;width:58px;height:15.1px;"></div>
<div class="btn" style="left:752.7px;top:428.3px;width:58.4px;height:15.1px;"></div>
<span id="t32" class="t" style="left:517.60px;top:103.00px;font-size:9.8px;color:#1a1a1a;font-weight:normal;transform:scaleX(0.9087);font-family:"Liberation Sans", sans-serif;">Folder Options</span>
<span id="t33" class="t d" style="left:524.00px;top:128.40px;font-size:8.5px;color:#1a1a1a;font-weight:normal;transform:scaleX(0.9455);font-family:"Liberation Sans", sans-serif;">General</span>
<span id="t34" class="t d" style="left:563.60px;top:126.60px;font-size:8.5px;color:#1a1a1a;font-weight:normal;transform:scaleX(0.9518);font-family:"Liberation Sans", sans-serif;">View</span>
<span id="t35" class="t d" style="left:596.00px;top:128.40px;font-size:8.5px;color:#1a1a1a;font-weight:normal;transform:scaleX(0.9503);font-family:"Liberation Sans", sans-serif;">Search</span>
<span id="t36" class="t d" style="left:537.80px;top:147.30px;font-size:8.5px;color:#1a1a1a;font-weight:normal;transform:scaleX(0.9430);font-family:"Liberation Sans", sans-serif;background:#f9f9f9;">Folder views</span>
<span id="t37" class="t d" style="left:587.80px;top:158.30px;font-size:8.5px;color:#1a1a1a;font-weight:normal;transform:scaleX(0.9312);font-family:"Liberation Sans", sans-serif;">You can apply this view (such as Details or Icons) to all</span>
<span id="t38" class="t d" style="left:587.80px;top:168.00px;font-size:8.5px;color:#1a1a1a;font-weight:normal;transform:scaleX(0.9139);font-family:"Liberation Sans", sans-serif;">folders of this type.</span>
<span id="t39" class="t d" style="left:604.00px;top:187.00px;font-size:8.5px;color:#1a1a1a;font-weight:normal;transform:scaleX(0.9573);font-family:"Liberation Sans", sans-serif;">Apply to Folders</span>
<span id="t40" class="t d" style="left:712.60px;top:187.00px;font-size:8.5px;color:#1a1a1a;font-weight:normal;transform:scaleX(0.9523);font-family:"Liberation Sans", sans-serif;">Reset Folders</span>
<span id="t41" class="t d" style="left:532.40px;top:225.30px;font-size:8.5px;color:#1a1a1a;font-weight:normal;transform:scaleX(0.9384);font-family:"Liberation Sans", sans-serif;">Advanced settings:</span>
<span id="t42" class="t d" style="left:559.60px;top:239.00px;font-size:8.5px;color:#111;font-weight:normal;transform:scaleX(0.9339);font-family:"Liberation Sans", sans-serif;">Show sync provider notifications</span>
<span id="t43" class="t d" style="left:559.60px;top:249.70px;font-size:8.5px;color:#111;font-weight:normal;transform:scaleX(0.9422);font-family:"Liberation Sans", sans-serif;">Use check boxes to select items</span>
<span id="t44" class="t d" style="left:559.60px;top:260.50px;font-size:8.5px;color:#111;font-weight:normal;transform:scaleX(0.9480);font-family:"Liberation Sans", sans-serif;">Use Sharing Wizard (Recommended)</span>
<span id="t45" class="t d" style="left:559.60px;top:271.20px;font-size:8.5px;color:#111;font-weight:normal;transform:scaleX(0.9200);font-family:"Liberation Sans", sans-serif;">When typing into list view</span>
<span id="t46" class="t d" style="left:571.00px;top:282.00px;font-size:8.5px;color:#111;font-weight:normal;transform:scaleX(0.9297);font-family:"Liberation Sans", sans-serif;">Automatically type into the Search Box</span>
<span id="t47" class="t d" style="left:571.00px;top:292.70px;font-size:8.5px;color:#111;font-weight:normal;transform:scaleX(0.9237);font-family:"Liberation Sans", sans-serif;">Select the typed item in the view</span>
<span id="t48" class="t d" style="left:548.00px;top:303.50px;font-size:8.5px;color:#111;font-weight:normal;transform:scaleX(0.9603);font-family:"Liberation Sans", sans-serif;">Navigation pane</span>
<span id="t49" class="t d" style="left:559.60px;top:314.20px;font-size:8.5px;color:#111;font-weight:normal;transform:scaleX(0.9382);font-family:"Liberation Sans", sans-serif;">Always show availability status</span>
<span id="t50" class="t d" style="left:559.60px;top:325.00px;font-size:8.5px;color:#111;font-weight:normal;transform:scaleX(0.9424);font-family:"Liberation Sans", sans-serif;">Expand to open folder</span>
<span id="t51" class="t d" style="left:559.60px;top:335.80px;font-size:8.5px;color:#111;font-weight:normal;transform:scaleX(0.9298);font-family:"Liberation Sans", sans-serif;">Show all folders</span>
<span id="t52" class="t d" style="left:559.60px;top:346.70px;font-size:8.5px;color:#ffffff;font-weight:normal;transform:scaleX(0.9365);font-family:"Liberation Sans", sans-serif;">Show libraries</span>
<span id="t53" class="t d" style="left:559.60px;top:357.50px;font-size:8.5px;color:#111;font-weight:normal;transform:scaleX(0.9268);font-family:"Liberation Sans", sans-serif;">Show Network</span>
<span id="t54" class="t d" style="left:559.60px;top:368.40px;font-size:8.5px;color:#111;font-weight:normal;transform:scaleX(0.9199);font-family:"Liberation Sans", sans-serif;">Show This PC</span>
<svg style="left:714.8px;top:387.9px" width="79" height="40" viewBox="0 0 79 40"><defs><filter id="ws" x="-10%" y="-50%" width="120%" height="200%"><feGaussianBlur stdDeviation=".5"/></filter></defs><path d="M.3 39.6H63.1M67.6 39.6H78.5" fill="none" stroke="rgba(40,30,30,.55)" stroke-width="1.1" filter="url(#ws)"/><path d="M16.1 0H78.3V24.6L62.9 39H0V15.1Z M78.3 28.4V39H67.3Z" fill="rgba(206,50,44,.56)"/><text x="13.6" y="26.4" font-family="'DejaVu Sans Light','DejaVu Sans',sans-serif" font-weight="200" font-size="19.4" fill="#fff" stroke="#fff" stroke-width=".75" textLength="49.5" lengthAdjust="spacingAndGlyphs">MUO</text></svg>
<span id="t55" class="t d" style="left:724.50px;top:396.70px;font-size:8.5px;color:#7a2725;font-weight:normal;transform:scaleX(0.9398);font-family:"Liberation Sans", sans-serif;">Restore Defaults</span>
<span id="t56" class="t d" style="left:647.00px;top:428.70px;font-size:8.5px;color:#1a1a1a;font-weight:normal;transform:scaleX(0.8957);font-family:"Liberation Sans", sans-serif;">OK</span>
<span id="t57" class="t d" style="left:704.80px;top:428.70px;font-size:8.5px;color:#1a1a1a;font-weight:normal;transform:scaleX(0.9407);font-family:"Liberation Sans", sans-serif;">Cancel</span>
<span id="t58" class="t d" style="left:770.90px;top:428.70px;font-size:8.5px;color:#1a1a1a;font-weight:normal;transform:scaleX(0.9922);font-family:"Liberation Sans", sans-serif;">Apply</span>
</body></html>
